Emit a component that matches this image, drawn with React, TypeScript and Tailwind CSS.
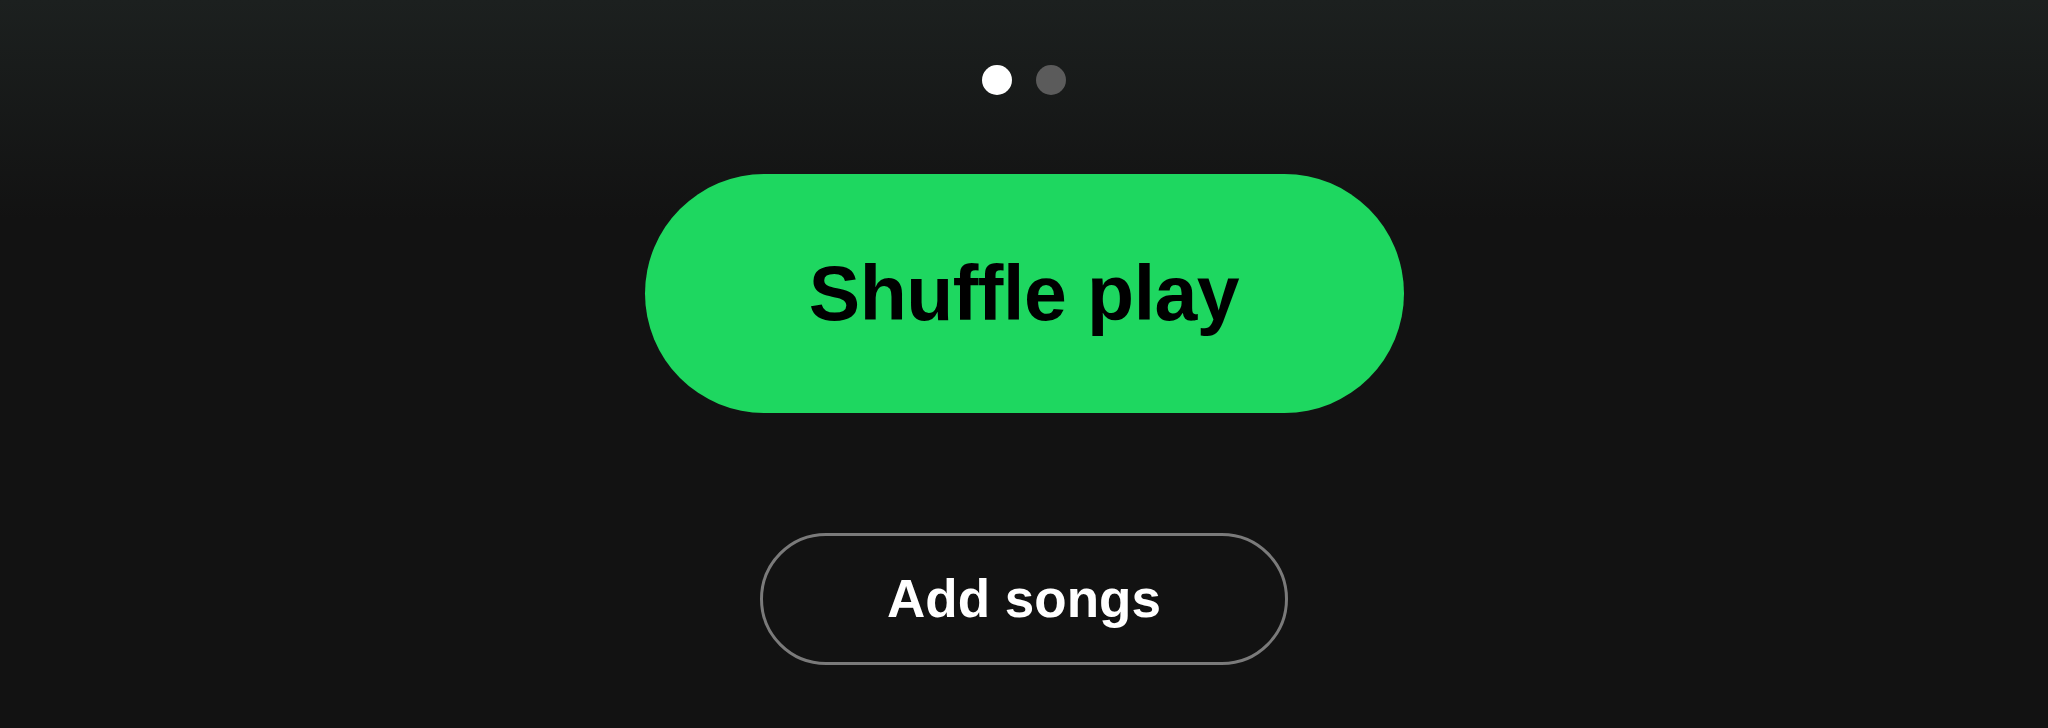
export default function App() {
  return (
    <div
      className="flex h-[728px] w-full flex-col items-center bg-[linear-gradient(to_bottom,#1c201f_0px,#121212_220px)] pt-[65px]"
      style={{ fontFamily: '"Liberation Sans", Arial, sans-serif' }}
    >
      {/* Page dots */}
      <div className="flex items-center gap-[24px]">
        <span className="block h-[30px] w-[30px] rounded-full bg-white" />
        <span className="block h-[30px] w-[30px] rounded-full bg-[#5b5b5b]" />
      </div>

      <button className="mt-[79px] flex h-[239px] w-[759px] items-center justify-center rounded-full bg-[#1ed760] text-[77px] font-bold tracking-[-0.5px] text-black">
        Shuffle play
      </button>

      <button className="mt-[120px] flex h-[132px] w-[528px] items-center justify-center rounded-full border-[3px] border-[#7a7a7a] text-[53px] font-bold text-white">
        Add songs
      </button>
    </div>
  );
}
